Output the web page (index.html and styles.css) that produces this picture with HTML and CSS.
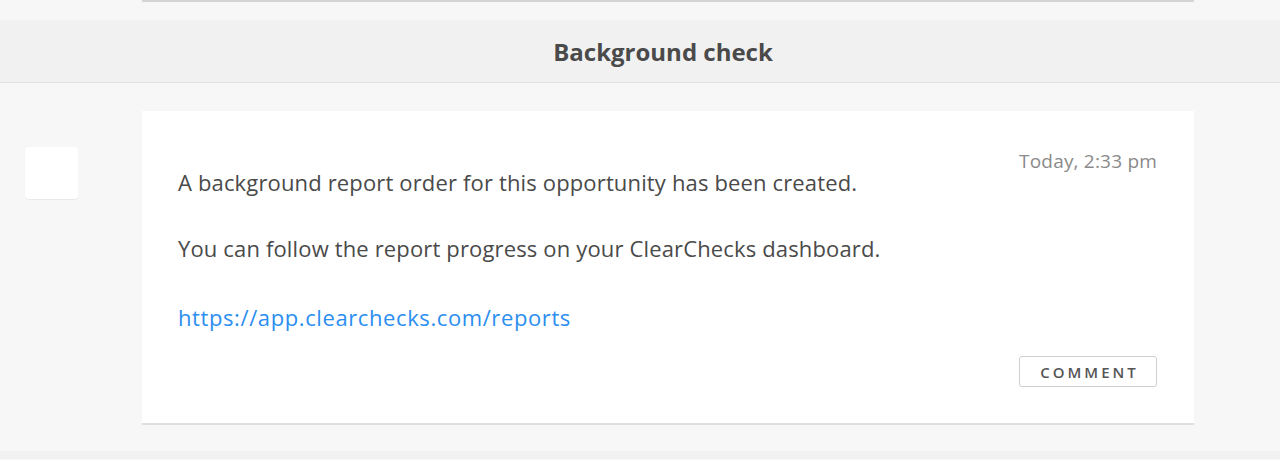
FILE: index.html
```html
<!DOCTYPE html>
<html lang="en">
<head>
<meta charset="utf-8">
<title>Background check</title>
<link rel="stylesheet" href="styles.css">
</head>
<body>
  <div class="prev-card"></div>
  <div class="section-header"><h2 class="section-title">Background check</h2></div>
  <div class="entry">
    <div class="avatar-col"><div class="avatar"></div></div>
    <div class="card">
      <div class="timestamp">Today, 2:33 pm</div>
      <p class="msg first">A background report order for this opportunity has been created.</p>
      <p class="msg">You can follow the report progress on your ClearChecks dashboard.</p>
      <p class="msg link-line"><a class="link" href="#">https://app.clearchecks.com/reports</a></p>
      <div class="actions"><button class="comment-btn">COMMENT</button></div>
    </div>
  </div>
  <div class="section-header next"></div>
</body>
</html>
```

FILE: styles.css
```css
* { box-sizing: border-box; }
html, body { margin: 0; padding: 0; height: 460px; overflow: hidden; }
body {
  background: #f7f7f7;
  font-family: "Open Sans", "Noto Sans", sans-serif;
  color: #4a4a4a;
  width: 1280px;
}
.prev-card {
  margin: 0 86px 0 142px;
  height: 2px;
  background: #d4d4d4;
}
.section-header {
  margin-top: 18px;
  height: 63px;
  background: #f1f1f1;
  border-bottom: 1px solid #e2e2e2;
  display: flex;
  align-items: center;
  justify-content: center;
  padding-left: 46px;
}
.section-title {
  margin: 0;
  font-size: 24px;
  font-weight: 700;
  color: #4a4a4a;
}
.section-header.next {
  margin-top: 26px;
  height: 8px;
  border-bottom: none;
}
.entry {
  display: flex;
  padding-top: 28px;
}
.avatar-col {
  width: 142px;
  flex: none;
}
.avatar {
  margin: 36px 0 0 25px;
  width: 53px;
  height: 52px;
  background: #fff;
  border-radius: 4px;
  box-shadow: 0 1px 1px rgba(0,0,0,0.06);
}
.card {
  width: 1052px;
  background: #fff;
  border-bottom: 2px solid #dedede;
  padding: 40px 37px 36px 36px;
}
.timestamp {
  float: right;
  font-size: 19px;
  line-height: 20px;
  letter-spacing: 0.2px;
  color: #8a8a8a;
}
.msg {
  margin: 0 0 42px;
  font-size: 22px;
  line-height: 24px;
  letter-spacing: 0.15px;
  color: #4a4a4a;
}
.msg.first { margin-top: 19px; }
.msg.link-line { margin: 0; padding-top: 3px; }
.link {
  color: #2b8ef0;
  text-decoration: none;
  letter-spacing: 0.6px;
}
.actions {
  display: flex;
  justify-content: flex-end;
  margin-top: 27px;
}
.comment-btn {
  width: 138px;
  height: 31px;
  background: #fff;
  border: 1px solid #cfcfcf;
  border-radius: 3px;
  font-family: "Open Sans", "Noto Sans", sans-serif;
  font-size: 15px;
  font-weight: 600;
  letter-spacing: 3px;
  color: #555;
  padding: 0 0 0 3px;
}
```
